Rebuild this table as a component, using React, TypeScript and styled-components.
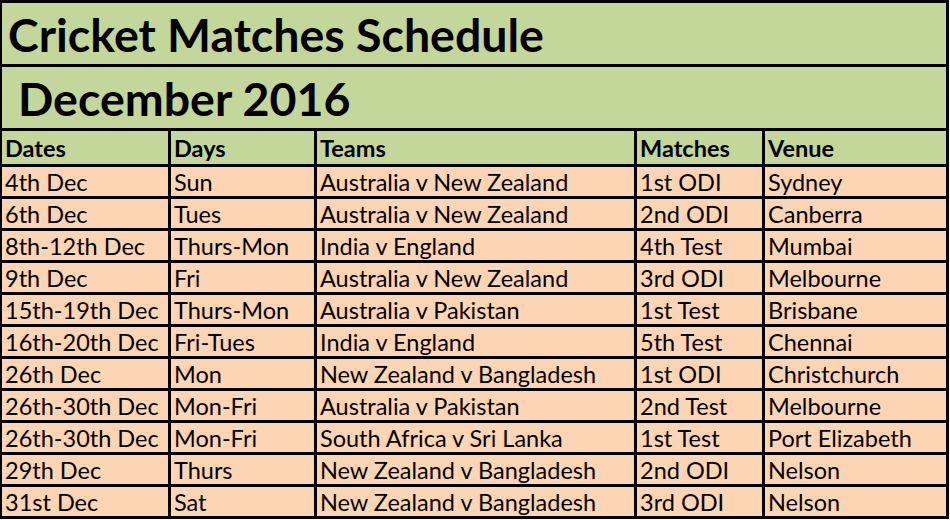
import React from "react";
import styled, { createGlobalStyle } from "styled-components";

const Global = createGlobalStyle`
  html, body { margin: 0; padding: 0; background: #ffffff; }
  body { font-family: Lato, "Open Sans", sans-serif; }
`;

const Sheet = styled.div`
  display: grid;
  grid-template-columns: 166px 143px 317px 125px 181px;
  grid-template-rows: 61px 61px 33px repeat(11, 29px);
  gap: 3px;
  padding: 3px 3px 3px 2px;
  background: #000;
  width: max-content;
  color: #000;
`;

const Banner = styled.div<{ $indent: number }>`
  grid-column: 1 / -1;
  background: #c4d79b;
  display: flex;
  align-items: center;
  padding-left: ${(p) => p.$indent}px;
  font-weight: 700;
  font-size: 46.5px;
  white-space: nowrap;
`;

const HeadCell = styled.div`
  background: #c4d79b;
  display: flex;
  align-items: center;
  padding-left: 3px;
  font-weight: 700;
  font-size: 23.5px;
  white-space: nowrap;
`;

const Cell = styled.div`
  background: #fcd5b4;
  display: flex;
  align-items: center;
  padding-left: 3px;
  font-size: 23.5px;
  white-space: nowrap;
  overflow: hidden;
`;

const headers = ["Dates", "Days", "Teams", "Matches", "Venue"];

const rows: string[][] = [
  ["4th Dec", "Sun", "Australia v New Zealand", "1st ODI", "Sydney"],
  ["6th Dec", "Tues", "Australia v New Zealand", "2nd ODI", "Canberra"],
  ["8th-12th Dec", "Thurs-Mon", "India v England", "4th Test", "Mumbai"],
  ["9th Dec", "Fri", "Australia v New Zealand", "3rd ODI", "Melbourne"],
  ["15th-19th Dec", "Thurs-Mon", "Australia v Pakistan", "1st Test", "Brisbane"],
  ["16th-20th Dec", "Fri-Tues", "India v England", "5th Test", "Chennai"],
  ["26th Dec", "Mon", "New Zealand v Bangladesh", "1st ODI", "Christchurch"],
  ["26th-30th Dec", "Mon-Fri", "Australia v Pakistan", "2nd Test", "Melbourne"],
  ["26th-30th Dec", "Mon-Fri", "South Africa v Sri Lanka", "1st Test", "Port Elizabeth"],
  ["29th Dec", "Thurs", "New Zealand v Bangladesh", "2nd ODI", "Nelson"],
  ["31st Dec", "Sat", "New Zealand v Bangladesh", "3rd ODI", "Nelson"],
];

export default function App() {
  return (
    <>
      <Global />
      <Sheet>
        <Banner $indent={6}>Cricket Matches Schedule</Banner>
        <Banner $indent={16}>December 2016</Banner>
        {headers.map((h) => (
          <HeadCell key={h}>{h}</HeadCell>
        ))}
        {rows.map((r, i) =>
          r.map((c, j) => <Cell key={`${i}-${j}`}>{c}</Cell>)
        )}
      </Sheet>
    </>
  );
}
